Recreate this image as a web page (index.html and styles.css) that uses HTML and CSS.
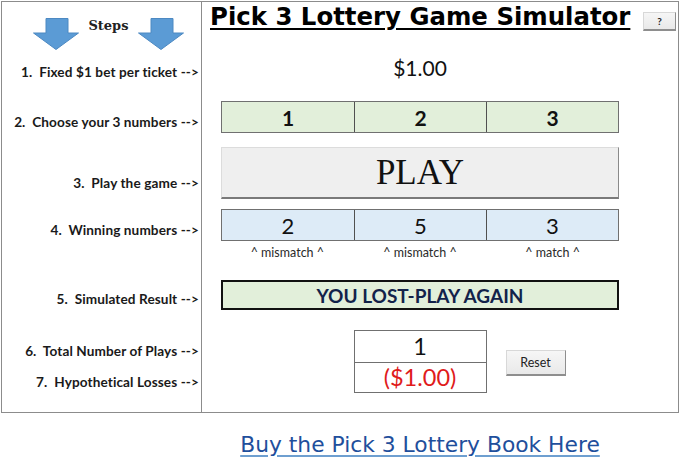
FILE: index.html
```html
<!DOCTYPE html>
<html lang="en">
<head>
<meta charset="utf-8">
<title>Pick 3 Lottery Game Simulator</title>
<link rel="stylesheet" href="styles.css">
</head>
<body>
<div class="sheet">
  <div class="steps">
    <div class="steps-head">
      <svg class="arrow" viewBox="0 0 46 32" width="46" height="32" aria-hidden="true">
        <path d="M13 0.5 H35 V15 H45.5 L23 31.5 L0.5 15 H13 Z"/>
      </svg>
      <span class="steps-title">Steps</span>
      <svg class="arrow" viewBox="0 0 46 32" width="46" height="32" aria-hidden="true">
        <path d="M13 0.5 H35 V15 H45.5 L23 31.5 L0.5 15 H13 Z"/>
      </svg>
    </div>
    <div class="step step-1">1.&nbsp; Fixed $1 bet per ticket --&gt;</div>
    <div class="step step-2">2.&nbsp; Choose your 3 numbers --&gt;</div>
    <div class="step step-3">3.&nbsp; Play the game --&gt;</div>
    <div class="step step-4">4.&nbsp; Winning numbers --&gt;</div>
    <div class="step step-5">5.&nbsp; Simulated Result --&gt;</div>
    <div class="step step-6">6.&nbsp; Total Number of Plays --&gt;</div>
    <div class="step step-7">7.&nbsp; Hypothetical Losses --&gt;</div>
  </div>

  <div class="game">
    <div class="game-head">
      <h1 class="title">Pick 3 Lottery Game Simulator</h1>
      <button class="btn btn-help" type="button">?</button>
    </div>

    <div class="bet">$1.00</div>

    <div class="cells cells-pick">
      <div class="cell">1</div>
      <div class="cell">2</div>
      <div class="cell">3</div>
    </div>

    <button class="play" type="button">PLAY</button>

    <div class="cells cells-win">
      <div class="cell">2</div>
      <div class="cell">5</div>
      <div class="cell">3</div>
    </div>

    <div class="matches">
      <span>^ mismatch ^</span>
      <span>^ mismatch ^</span>
      <span>^ match ^</span>
    </div>

    <div class="result">YOU LOST-PLAY AGAIN</div>

    <div class="tally">
      <div class="counter">
        <div class="counter-row">1</div>
        <div class="counter-row loss">($1.00)</div>
      </div>
      <button class="btn btn-reset" type="button">Reset</button>
    </div>
  </div>
</div>

<div class="footer">
  <a class="book-link" href="#">Buy the Pick 3 Lottery Book Here</a>
</div>
</body>
</html>
```

FILE: styles.css
```css
* {
  box-sizing: border-box;
}

body {
  margin: 0;
  background: #ffffff;
  color: #111111;
  font-family: Lato, "Open Sans", sans-serif;
}

/* outer worksheet frame */
.sheet {
  display: flex;
  width: 678px;
  height: 412px;
  margin: 1px 0 0 1px;
  border: 1px solid #8c8c8c;
}

/* ---- left column: the numbered steps ---- */
.steps {
  width: 200px;
  flex: none;
  border-right: 1px solid #8c8c8c;
  padding-right: 2px;
}

.steps-head {
  display: flex;
  align-items: flex-start;
  height: 48px;
  padding: 16px 0 0 31px;
}

.arrow {
  display: block;
  fill: #5b9bd5;
  stroke: #4d89c2;
  stroke-width: 1;
}

.steps-title {
  width: 59px;
  text-align: center;
  font-family: "DejaVu Serif", serif;
  font-weight: bold;
  font-size: 13px;
  line-height: 16px;
  color: #222222;
}

.step {
  height: 20px;
  line-height: 20px;
  text-align: right;
  white-space: nowrap;
  font-weight: bold;
  font-size: 13.6px;
  letter-spacing: 0.1px;
  color: #1a1a1a;
}

.step-1 { margin-top: 12px; }
.step-2 { margin-top: 30px; }
.step-3 { margin-top: 41px; }
.step-4 { margin-top: 27px; }
.step-5 { margin-top: 49px; }
.step-6 { margin-top: 32px; }
.step-7 { margin-top: 11px; }

/* ---- right column: the game board ---- */
.game {
  flex: 1;
  display: flex;
  flex-direction: column;
  padding-left: 8px;
}

.game-head {
  display: flex;
  align-items: flex-start;
  height: 38px;
}

.title {
  margin: 0;
  padding-top: 1px;
  font-family: "DejaVu Sans", sans-serif;
  font-weight: bold;
  font-size: 24.4px;
  line-height: 28px;
  text-decoration: underline;
  text-decoration-thickness: 2px;
  text-underline-offset: 3px;
  white-space: nowrap;
  color: #000000;
}

.btn {
  padding: 0;
  font-family: Lato, sans-serif;
  color: #222222;
  background: linear-gradient(#f6f6f6, #e9e9e9);
  border: 1px solid #d8d8d8;
  border-right-color: #8e8e8e;
  border-bottom: 2px solid #8e8e8e;
  border-radius: 0;
}

.btn-help {
  width: 33px;
  height: 19px;
  margin: 10px 2px 0 auto;
  font-size: 10px;
  font-weight: bold;
}

.bet,
.cells,
.play,
.matches,
.result,
.tally {
  width: 398px;
  margin-left: 11px;
}

.bet {
  height: 30px;
  line-height: 30px;
  margin-top: 13px;
  text-align: center;
  font-size: 21px;
  color: #111111;
}

.cells {
  display: grid;
  grid-template-columns: 1fr 1fr 1fr;
  height: 32px;
  border: 1px solid #707070;
}

.cell {
  display: flex;
  align-items: center;
  justify-content: center;
  font-size: 21px;
}

.cell + .cell {
  border-left: 1px solid #505050;
}

.cells-pick {
  margin-top: 18px;
  background: #e2efda;
}

.cells-pick .cell {
  font-weight: bold;
}

.play {
  height: 52px;
  margin-top: 14px;
  padding: 0;
  background: #efefef;
  border: 1px solid #dcdcdc;
  border-right-color: #8a8a8a;
  border-bottom: 2px solid #7a7a7a;
  border-radius: 0;
  font-family: "Liberation Serif", serif;
  font-size: 35px;
  color: #111111;
}

.cells-win {
  margin-top: 10px;
  background: #ddebf7;
}

.cells-win .cell {
  font-size: 22px;
}

.matches {
  display: grid;
  grid-template-columns: 1fr 1fr 1fr;
  margin-top: 5px;
  height: 14px;
  line-height: 14px;
  text-align: center;
  font-size: 12.5px;
  color: #2a2a2a;
}

.result {
  height: 30px;
  margin-top: 20px;
  display: flex;
  align-items: center;
  justify-content: center;
  background: #e2efda;
  border: 2px solid #111111;
  font-weight: bold;
  font-size: 19px;
  color: #12224a;
}

.tally {
  display: grid;
  grid-template-columns: 1fr 133px 1fr;
  align-items: center;
  margin-top: 20px;
}

.counter {
  grid-column: 2;
  height: 63px;
  display: grid;
  grid-template-rows: 1fr 1fr;
  border: 1px solid #707070;
}

.counter-row {
  display: flex;
  align-items: center;
  justify-content: center;
  font-size: 23.5px;
}

.counter-row + .counter-row {
  border-top: 1px solid #707070;
}

.loss {
  color: #e01b1b;
}

.btn-reset {
  grid-column: 3;
  justify-self: start;
  width: 60px;
  height: 26px;
  margin: 3px 0 0 19px;
  font-size: 12.5px;
}

/* ---- link under the sheet ---- */
.footer {
  display: flex;
  justify-content: center;
  width: 398px;
  margin: 20px 0 0 221px;
  line-height: 24px;
}

.book-link {
  white-space: nowrap;
  font-family: "DejaVu Sans", sans-serif;
  font-size: 21.8px;
  color: #1f4f9c;
  text-decoration-color: #6e9fd0;
  text-underline-offset: 3px;
}
```
